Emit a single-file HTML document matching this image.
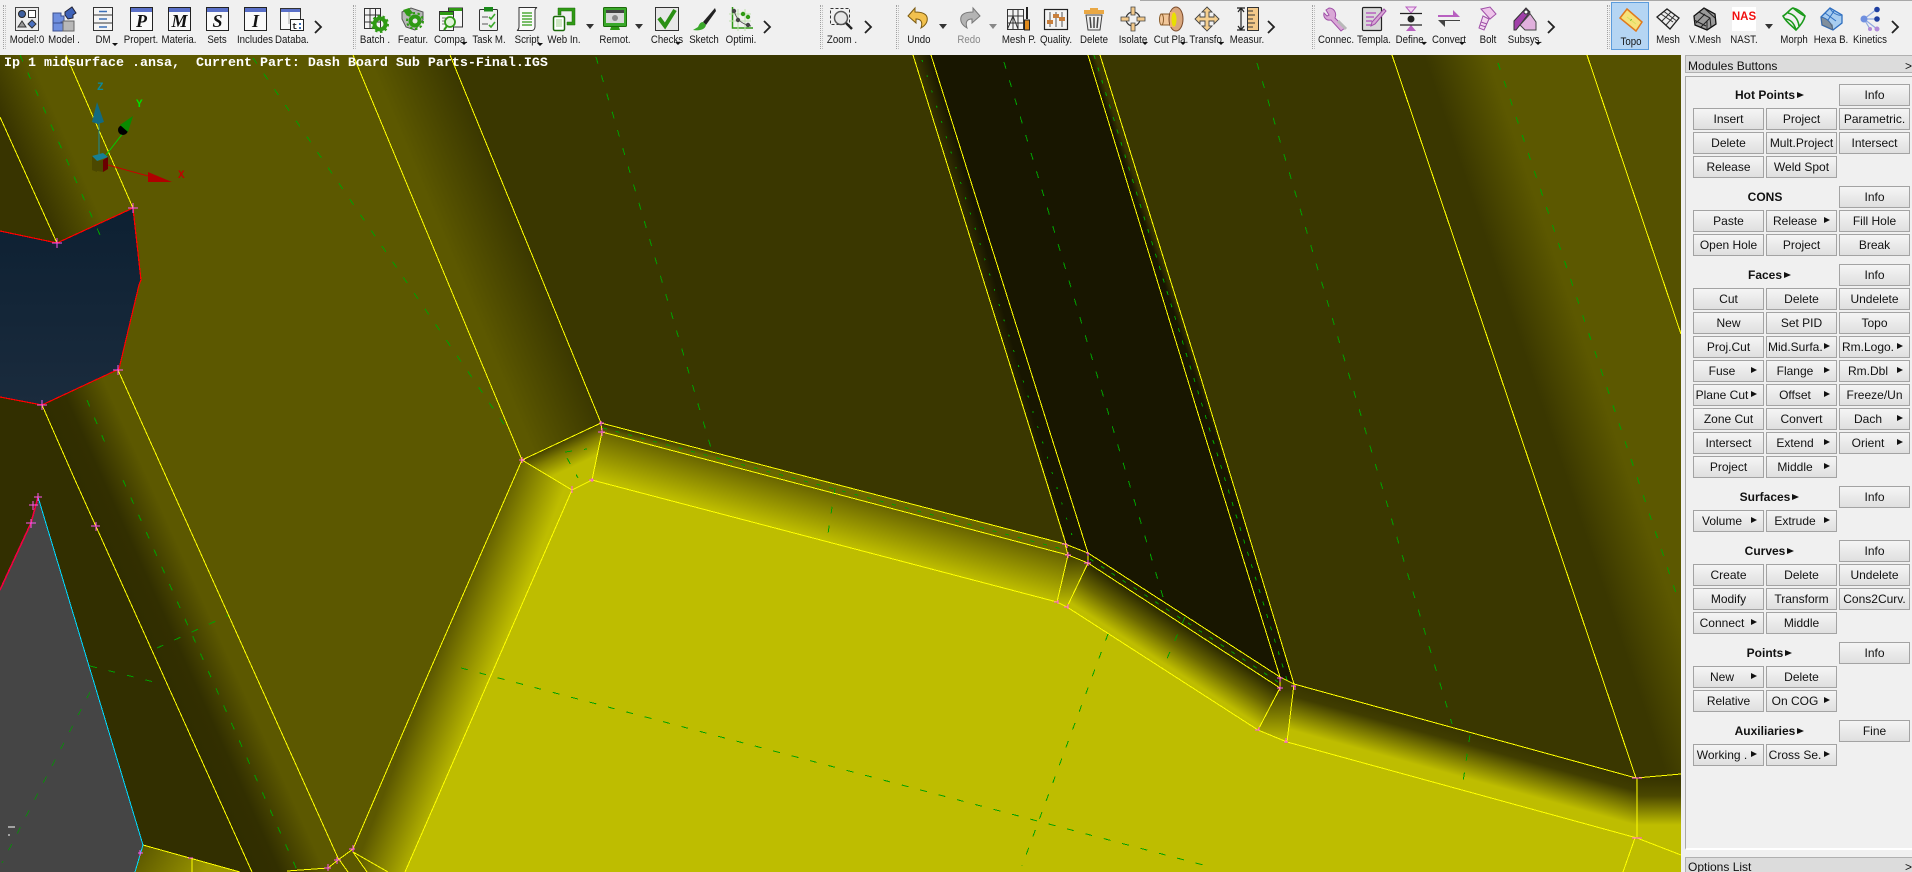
<!DOCTYPE html>
<html><head><meta charset="utf-8"><title>ANSA</title>
<style>
html,body{margin:0;padding:0;width:1912px;height:872px;overflow:hidden;background:#f0f0f0}
body{position:relative;font-family:"Liberation Sans",sans-serif;color:#111}
#vp{position:absolute;left:0;top:55px}
#tb{position:absolute;left:0;top:0}
.l{position:absolute;top:34px;font-size:11px;line-height:13px;transform:translateX(-50%) scaleX(.88);white-space:nowrap;color:#161616}
.h{position:absolute;top:5px;height:44px;border-left:1px dotted #a0a0a0;border-right:1px dotted #c0c0c0;width:1px}
#cap{position:absolute;left:4px;top:56px;font:bold 13.33px/15px "Liberation Mono",monospace;color:#fff;white-space:pre}
#panel{position:absolute;left:1681px;top:55px;width:231px;height:817px;background:#f0f0f0}
.t{position:absolute;left:1685px;width:227px;height:18px;background:#dcdcdc;border:1px solid #b0b0b0;border-right:0;box-sizing:border-box;font-size:12px;line-height:20px;padding-left:2px;color:#111}
.t b{position:absolute;right:0;top:0;font-weight:normal}
#fr{position:absolute;left:1685px;top:76px;width:227px;height:774px;border:1px solid #a8a8a8;border-right:0;border-bottom:2px solid #fff;box-sizing:border-box}
.b{position:absolute;width:71px;height:22px;box-sizing:border-box;border:1px solid #a3a3a3;background:linear-gradient(#f5f5f5,#dfdfdf);font-size:12px;line-height:20px;text-align:center;white-space:nowrap;color:#111}
.a{padding:0 14px 0 1px}
.a i{position:absolute;width:0;height:0;border-left:6px solid #111;border-top:3.5px solid transparent;border-bottom:3.5px solid transparent;right:6px;top:6px}
.c1{left:1693px}.c2{left:1766px}.c3{left:1839px}
.g{position:absolute;left:1693px;width:144px;text-align:center;font-size:12px;font-weight:bold;line-height:22px;color:#111}
.g span{position:relative}
.g i{position:absolute;width:0;height:0;border-left:7px solid #111;border-top:3.5px solid transparent;border-bottom:3.5px solid transparent;left:100%;margin-left:2px;top:50%;margin-top:-3px}
</style></head><body>

<svg id="vp" width="1681" height="817" viewBox="0 55 1681 817" xmlns="http://www.w3.org/2000/svg">
<defs>
<linearGradient id="g1" gradientUnits="userSpaceOnUse" x1="57" y1="243" x2="134" y2="209"><stop offset="0" stop-color="#383400"/><stop offset=".6" stop-color="#5c5800"/></linearGradient>
<linearGradient id="nv" x1="0" y1="0" x2="0" y2="1"><stop offset="0" stop-color="#0d2032"/><stop offset="1" stop-color="#1a2b3d"/></linearGradient>
<linearGradient id="g2" gradientUnits="userSpaceOnUse" x1="75" y1="480" x2="151.500" y2="445.500"><stop offset="0" stop-color="#302d00"/><stop offset=".3" stop-color="#322f00"/><stop offset=".8" stop-color="#5c5800"/></linearGradient>
<linearGradient id="g3" gradientUnits="userSpaceOnUse" x1="143" y1="845" x2="200" y2="880"><stop offset="0" stop-color="#5c5800"/><stop offset="1" stop-color="#9a9600"/></linearGradient>
<linearGradient id="g4" gradientUnits="userSpaceOnUse" x1="353" y1="55" x2="435.600" y2="20.500"><stop offset=".15" stop-color="#5c5800"/><stop offset="1" stop-color="#3a3700"/></linearGradient>
<linearGradient id="g5" gradientUnits="userSpaceOnUse" x1="913" y1="55" x2="931" y2="50"><stop offset="0" stop-color="#3a3700"/><stop offset="1" stop-color="#181600"/></linearGradient>
<linearGradient id="g6" gradientUnits="userSpaceOnUse" x1="1088" y1="55" x2="1100" y2="51"><stop offset="0" stop-color="#181600"/><stop offset=".5" stop-color="#3a3700"/><stop offset="1" stop-color="#3a3700"/></linearGradient>
<linearGradient id="g7" gradientUnits="userSpaceOnUse" x1="1392" y1="55" x2="1487" y2="23"><stop offset=".3" stop-color="#3a3700"/><stop offset=".9" stop-color="#5c5800"/></linearGradient>
<linearGradient id="s1" gradientUnits="userSpaceOnUse" x1="601" y1="423" x2="599" y2="432"><stop offset="0" stop-color="#333000"/><stop offset="1" stop-color="#6a6600"/></linearGradient>
<linearGradient id="s2" gradientUnits="userSpaceOnUse" x1="602" y1="432" x2="590" y2="477"><stop offset="0" stop-color="#6a6600"/><stop offset=".6" stop-color="#9c9a00"/><stop offset="1" stop-color="#bebd00"/></linearGradient>
<linearGradient id="s3" gradientUnits="userSpaceOnUse" x1="0" y1="555" x2="0" y2="605"><stop offset="0" stop-color="#403d00"/><stop offset="1" stop-color="#bebd00"/></linearGradient>
<linearGradient id="s4" gradientUnits="userSpaceOnUse" x1="1088" y1="563" x2="1062" y2="603"><stop offset="0" stop-color="#2a2800"/><stop offset=".45" stop-color="#6c6900"/><stop offset=".9" stop-color="#bebd00"/></linearGradient>
<linearGradient id="s5" gradientUnits="userSpaceOnUse" x1="0" y1="690" x2="0" y2="742"><stop offset="0" stop-color="#403d00"/><stop offset="1" stop-color="#bebd00"/></linearGradient>
<linearGradient id="s6" gradientUnits="userSpaceOnUse" x1="1294" y1="684" x2="1278" y2="742"><stop offset="0" stop-color="#383500"/><stop offset=".2" stop-color="#403d00"/><stop offset=".75" stop-color="#bebd00"/></linearGradient>
<linearGradient id="s7" gradientUnits="userSpaceOnUse" x1="0" y1="780" x2="0" y2="825"><stop offset="0" stop-color="#383500"/><stop offset=".35" stop-color="#4a4700"/><stop offset="1" stop-color="#bebd00"/></linearGradient>
<linearGradient id="s8" gradientUnits="userSpaceOnUse" x1="561" y1="441" x2="576" y2="473"><stop offset="0" stop-color="#403d00"/><stop offset=".35" stop-color="#807c00"/><stop offset=".8" stop-color="#bebd00"/></linearGradient>
<linearGradient id="s9" gradientUnits="userSpaceOnUse" x1="438" y1="654" x2="492" y2="675"><stop offset="0" stop-color="#5c5800"/><stop offset="1" stop-color="#bebd00"/></linearGradient>
<linearGradient id="s10" gradientUnits="userSpaceOnUse" x1="1088" y1="553" x2="1082" y2="563"><stop offset="0" stop-color="#1c1a00"/><stop offset="1" stop-color="#2a2800"/></linearGradient>
</defs>
<rect x="0" y="55" width="1681" height="817" fill="#5c5800"/>
<!-- top left -->
<polygon points="0,55 66,55 133,208 57,243 0,117" fill="url(#g1)"/>
<polygon points="0,117 57,243 0,231" fill="#383400"/>
<!-- lower left -->
<polygon points="0,397 42,405 75,480 252,872 0,872" fill="#322f00"/>
<polygon points="42,405 118,370 338,858 348,872 252,872 75,480" fill="url(#g2)"/>
<!-- navy -->
<polygon points="0,231 57,243 133,208 141,280 139,285 119,369 42,405 0,397" fill="url(#nv)"/>
<!-- gray -->
<polygon points="38,497 143,845 135,872 0,872 0,590 31,523" fill="#454545"/>
<polygon points="143,845 240,872 135,872" fill="url(#g3)"/>
<!-- upper centre -->
<polygon points="353,55 522,460 601,423 450,55" fill="url(#g4)"/>
<polygon points="450,55 601,423 1065,544 913,55" fill="#3a3700"/>
<polygon points="913,55 931,55 1088,553 1066,544" fill="url(#g5)"/>
<polygon points="931,55 1088,55 1200,420 1280,677 1088,553" fill="#181600"/>
<polygon points="1088,55 1100,55 1200,375 1294,684 1280,677 1200,420" fill="url(#g6)"/>
<polygon points="1100,55 1392,55 1636,778 1294,684 1200,375" fill="#3a3700"/>
<polygon points="1392,55 1587,55 1681,334 1681,774 1636,778" fill="url(#g7)"/>
<polygon points="1587,55 1681,55 1681,334" fill="#555100"/>
<!-- yellow -->
<polygon points="572,490 592,480 1057,602 1067,607 1258,730 1287,742 1637,838 1681,855 1681,872 405,872" fill="#bebd00"/>
<polygon points="522,460 572,490 405,872 367,872 353,849" fill="url(#s9)"/>
<polygon points="522,460 601,423 602,432 592,480 572,490" fill="url(#s8)"/>
<polygon points="601,423 1065,544 1068,555 602,432" fill="url(#s1)"/>
<polygon points="602,432 1068,555 1057,602 592,480" fill="url(#s2)"/>
<polygon points="1065,544 1088,553 1088,563 1068,555" fill="#333000"/>
<polygon points="1068,555 1088,563 1067,607 1057,602" fill="url(#s3)"/>
<polygon points="1088,553 1280,677 1280,688 1088,563" fill="url(#s10)"/>
<polygon points="1088,563 1280,688 1258,730 1067,607" fill="url(#s4)"/>
<polygon points="1280,677 1294,684 1287,742 1258,730 1280,688" fill="url(#s5)"/>
<polygon points="1294,684 1636,778 1637,838 1287,742" fill="url(#s6)"/>
<polygon points="1637,778 1681,774 1681,855 1637,838" fill="url(#s7)"/>

<!-- green dashes -->
<g fill="none" stroke="#00a000" stroke-width="1" stroke-dasharray="7 12" shape-rendering="crispEdges">
<path d="M20 55L100 235M87 400L108 450M123 480L297 870M253 58L510 433M596 57L711 448M835 488L827 540M1004 62L1163 597M1185 617L1163 668M1257 63L1452 724M1470 735L1462 789M1498 63L1678 599M1108 634L1022 866M461 668L1207 866M157 648L229 615M90 666L162 684M565 452L587 449M567 458L578 478"/>
<path d="M90 692L2 863" stroke="#0a8a0a"/>
</g>
<g fill="none" stroke="#00a000" stroke-width="1" stroke-dasharray="4 9" shape-rendering="crispEdges">
<path d="M603 428L1062 549M1090 559L1278 682M1094 55L1287 680"/>
<path d="M922 60L1075 545" stroke-dasharray="2 14"/>
</g>

<!-- yellow lines -->
<g fill="none" stroke="#ffff00" stroke-width="1" shape-rendering="crispEdges">
<path d="M0 117L57 243M66 55L133 208M118 370L338 858M42 405L75 480L252 872M353 55L522 460L420 693L353 849M450 55L500 177L601 423L1065 544L1088 553L1280 677L1294 684L1636 778L1681 774M602 432L1068 555L1088 563L1280 688M592 480L1057 602L1067 607L1258 730L1287 742L1637 838L1681 855M522 460L572 490L592 480L602 432L601 423M522 460L601 423M572 490L405 872M1065 544L1068 555L1057 602M1088 553L1088 563L1067 607M1280 678L1280 688L1258 730M1294 684L1287 742M913 55L1066 544M931 55L1088 553M1088 55L1200 420L1280 677M1100 55L1200 375L1294 684M1392 55L1636 778M1587 55L1681 334M1637 778L1637 838M1635 838L1623 872M143 845L240 872M192 858L192 872M338 858L348 872M338 860L353 849M353 852L367 872M353 852L388 872M287 871L328 868L338 860"/>
</g>
<!-- red / cyan outlines -->
<path d="M0 231L57 243L133 208L141 280L139 285L119 369L42 405L0 397" fill="none" stroke="#ff0000" stroke-width="1.200" shape-rendering="crispEdges"/>
<path d="M38 497L31 523L0 590" fill="none" stroke="#f00040" stroke-width="1.600" shape-rendering="crispEdges"/>
<path d="M38 497L143 845L135 872" fill="none" stroke="#00d8ff" stroke-width="1" shape-rendering="crispEdges"/>
<!-- pink crosses -->
<path fill="none" stroke="#ff55ee" stroke-width="1" shape-rendering="crispEdges" d="M128 208h10M133 203v10M52 243h10M57 238v10M113 370h10M118 365v10M37 405h10M42 400v10M34 497h8M38 493v8M29 505h9M33 501v9M26 523h10M31 519v9M91 526h9M96 522v9M138 853h5M140 850v6M334 860h7M337 857v7M349 849h6M353 845v7M324 868h7M328 864v7M519 460h6M522 457v6M599 423h5M601 421v5M598 432h7M602 428v8M589 480h5M592 478v4M572 486v7M1062 544h5M1067 544v4M1065 555h6M1068 552v6M1086 553h3M1088 553v3M1084 563h7M1088 560v6M1054 602h4M1058 600v4M1064 607h4M1068 604v5M1277 678h6M1280 678v4M1277 688h6M1280 686v5M1291 686h5M1295 686v4M1255 730h4M1259 727v4M1284 742h4M1286 738v5M1632 778h10M1632 838h10M188 858h5"/>
<!-- little white marks -->
<path d="M8 827h7M8 835h2" stroke="#fff" stroke-width="1" shape-rendering="crispEdges"/>
<!-- axes -->
<g>
<path d="M99 122V157" stroke="#1a8a9a" stroke-width="1"/>
<path d="M106 155L127 128" stroke="#00d000" stroke-width="1"/>
<path d="M108 165L148 176" stroke="#c80000" stroke-width="1"/>
<path d="M97 102L104 122L98 124L92 122Z" fill="#126a80"/>
<circle cx="123" cy="130" r="5" fill="#000"/>
<path d="M133 116L128 132L120 125Z" fill="#0a8a00"/>
<path d="M172 182L148 172L148 182Z" fill="#b00000"/>
<path d="M92 156L103 153L108 157L97 161Z" fill="#178094"/>
<path d="M92 156L97 161V172L92 170Z" fill="#4c4800"/>
<path d="M97 161L92 170L103 172L103 160Z" fill="#4c4800"/>
<path d="M103 160L108 157V169L103 172Z" fill="#6a0000"/>
<text x="97" y="90" font-family="Liberation Mono" font-weight="bold" font-size="11" fill="#0c8a9c">Z</text>
<text x="136" y="107" font-family="Liberation Mono" font-weight="bold" font-size="11" fill="#00e000">Y</text>
<text x="178" y="178" font-family="Liberation Mono" font-weight="bold" font-size="11" fill="#c00000">X</text>
</g>
</svg>
<div id="cap">Ip 1 midsurface .ansa,  Current Part: Dash Board Sub Parts-Final.IGS</div>

<!-- toolbar -->
<div style="position:absolute;left:0;top:0;width:1912px;height:55px;background:#f0f0f0"></div>
<div style="position:absolute;left:1140px;top:0;width:772px;height:1px;background:#a8a8a8"></div>
<div class="h" style="left:3px"></div><div class="h" style="left:353px"></div><div class="h" style="left:820px"></div><div class="h" style="left:896px"></div><div class="h" style="left:1312px"></div><div class="h" style="left:1607px"></div>
<div style="position:absolute;left:1611px;top:2px;width:38px;height:48px;box-sizing:border-box;background:#b5d5f3;border:1px solid #5c9cdc"></div>

<svg id="tb" width="1912" height="55" xmlns="http://www.w3.org/2000/svg">
<!-- Model:0 -->
<g transform="translate(15,7)"><rect x=".5" y=".5" width="23" height="23" fill="#ececec" stroke="#444"/><circle cx="7" cy="7" r="3.500" fill="#3e5f9e" stroke="#222"/><rect x="13.500" y="3.500" width="7" height="7" fill="#fff" stroke="#333"/><path d="M7 14l4 6H3z" fill="#999" stroke="#333"/><path d="M17 13l4 4-4 4-4-4z" fill="#4a70c0" stroke="#333"/></g>
<!-- Model . -->
<g transform="translate(52,7)"><path d="M1 6h8v3h3v6H9v1H1z" fill="#6f8fdf" stroke="#3b4f8f"/><path d="M1 16h10v8H1z" fill="#6f8fdf" stroke="#3b4f8f"/><path d="M11 14h11v10H11z" fill="#b8b8b8" stroke="#666"/><path d="M13 5l7-5 4 6-3 2 0 3-5 1-3-4z" fill="#3e62b8" stroke="#223"/></g>
<!-- DM -->
<g transform="translate(91,7)"><rect x="2.500" y=".5" width="19" height="23" fill="#f4f4f4" stroke="#333"/><path d="M2.500 8h19M2.500 16h19" stroke="#333"/><path d="M8 4.500h8M8 12h8M8 20h8" stroke="#3c70b8" stroke-width="1.500"/></g>
<!-- P M S I -->
<g transform="translate(129,7)"><rect x="1.500" y=".5" width="22" height="23" fill="#fafafa" stroke="#222"/><rect x="2" y="1" width="21" height="4" fill="#5a70c8"/><text x="12.500" y="20" text-anchor="middle" font-family="Liberation Serif" font-style="italic" font-weight="bold" font-size="18" fill="#111">P</text></g>
<g transform="translate(167,7)"><rect x="1.500" y=".5" width="22" height="23" fill="#fafafa" stroke="#222"/><rect x="2" y="1" width="21" height="4" fill="#5a70c8"/><text x="12.500" y="20" text-anchor="middle" font-family="Liberation Serif" font-style="italic" font-weight="bold" font-size="18" fill="#111">M</text></g>
<g transform="translate(205,7)"><rect x="1.500" y=".5" width="22" height="23" fill="#fafafa" stroke="#222"/><rect x="2" y="1" width="21" height="4" fill="#5a70c8"/><text x="12.500" y="20" text-anchor="middle" font-family="Liberation Serif" font-style="italic" font-weight="bold" font-size="18" fill="#111">S</text></g>
<g transform="translate(243,7)"><rect x="1.500" y=".5" width="22" height="23" fill="#fafafa" stroke="#222"/><rect x="2" y="1" width="21" height="4" fill="#5a70c8"/><text x="12.500" y="20" text-anchor="middle" font-family="Liberation Serif" font-style="italic" font-weight="bold" font-size="18" fill="#111">I</text></g>
<!-- Databa. -->
<g transform="translate(280,7)"><rect x=".5" y="1.500" width="20" height="21" fill="#fafafa" stroke="#333"/><rect x="1" y="2" width="19" height="3" fill="#5a70c8"/><path d="M9 5v12" stroke="#aaa"/><rect x="10.500" y="12.500" width="13" height="11" fill="#fff" stroke="#222"/><text x="12" y="22" font-family="Liberation Mono" font-weight="bold" font-size="9" fill="#222">t</text><path d="M19 16h2v2h-2zM19 20h2v2h-2z" fill="#3c70b8"/></g>
<!-- Batch -->
<g transform="translate(363,7)"><rect x="1.500" y="1.500" width="16" height="20" fill="#f4f4f4" stroke="#333"/><path d="M1.500 8h16M1.500 15h16M7 1.500v20M12.500 1.500v20" stroke="#333"/><circle cx="17" cy="17" r="5.500" fill="none" stroke="#2f9a14" stroke-width="4"/><circle cx="17" cy="17" r="8" fill="none" stroke="#2f9a14" stroke-width="2" stroke-dasharray="2.500 2.500"/></g>
<!-- Featur. -->
<g transform="translate(401,7)"><path d="M1 5l9-4 12 4v8l-8 10-9-3-4-8z" fill="#b8b8b8" stroke="#555"/><path d="M2 3l6-2 4 5-6 3z" fill="#2f9a14"/><circle cx="14" cy="14" r="4.500" fill="#e8e8e8" stroke="#2f9a14" stroke-width="4"/><circle cx="14" cy="14" r="8" fill="none" stroke="#2f9a14" stroke-width="2" stroke-dasharray="2.500 2.500"/></g>
<!-- Compa. -->
<g transform="translate(439,7)"><rect x="9.500" y="1" width="14" height="19" fill="#f6f6f6" stroke="#333"/><rect x="10" y="1" width="13" height="3" fill="#2f9a14"/><rect x=".5" y="4.500" width="14" height="19" fill="#f6f6f6" stroke="#333"/><rect x="1" y="5" width="13" height="3" fill="#2f9a14"/><path d="M3 11h9M3 14h9M3 17h9" stroke="#777"/><circle cx="11" cy="15" r="5" fill="#e0f4d8" stroke="#2f9a14" stroke-width="1.800"/><path d="M8 19l-3 4" stroke="#2f9a14" stroke-width="2"/></g>
<!-- Task M. -->
<g transform="translate(477,7)"><rect x="2.500" y="2.500" width="18" height="21" rx="1" fill="#f0f0f0" stroke="#333"/><rect x="7" y="0" width="9" height="4.500" fill="#1b8a1b"/><path d="M5 10h6M5 17h6" stroke="#555"/><path d="M12 10l2 2 4-5M12 18l2 2 4-5" fill="none" stroke="#3aa82a" stroke-width="1.600"/></g>
<!-- Script -->
<g transform="translate(515,7)"><path d="M4 .5h18c-2 1-2 2-2 4v15c0 2-1 4-3 4H2c2-1 2-3 2-4z" fill="#fafafa" stroke="#333"/><path d="M7 6h10M7 9h10M7 12h10M7 15h10M7 18h10" stroke="#2f9a14" stroke-width="1.200"/></g>
<!-- Web In. -->
<g transform="translate(552,7)"><path d="M6 1h17v17H15V15h5V4H9v4H6z" fill="#2f9a14" stroke="#1c6a0a" stroke-width=".5"/><rect x="1.500" y="9.500" width="11" height="14" rx="1.500" fill="#fff" stroke="#1c6a0a" stroke-width="1.500"/><rect x="4" y="12" width="6" height="8" fill="#cfe8c4"/></g>
<path d="M586 24h8l-4 5z" fill="#333"/>
<!-- Remot. -->
<g transform="translate(603,7)"><rect x=".5" y=".5" width="23" height="19" rx="1" fill="#3aa82a" stroke="#1c6a0a"/><rect x="3" y="3" width="18" height="13" fill="#d8d8d8"/><rect x="3" y="3" width="18" height="3" fill="#444"/><circle cx="12" cy="11" r="3" fill="#888"/><path d="M8 20h8l1 3H7z" fill="#2f9a14"/></g>
<path d="M635 24h8l-4 5z" fill="#333"/>
<!-- Checks -->
<g transform="translate(655,7)"><rect x=".5" y=".5" width="23" height="23" fill="#e8e8e8" stroke="#333"/><path d="M4 11l6 8L20 3" fill="none" stroke="#2a8f14" stroke-width="4"/></g>
<!-- Sketch -->
<g transform="translate(692,7)"><path d="M23 1L11 15l3 3L24 4z" fill="#222"/><path d="M11 15c-3 0-4 3-5 5l-5 3c6 1 12 0 13-5z" fill="#3aa82a"/></g>
<!-- Optimi. -->
<g transform="translate(729,7)"><path d="M3.500 0V21H24" fill="none" stroke="#2f9a14" stroke-width="1.500"/><path d="M0 7h22M0 14h22M9 2v22M16 2v22" stroke="#bfe0b0"/><path d="M5 2c1 9 7 15 17 17" fill="none" stroke="#555"/><circle cx="5" cy="4" r="2.200" fill="#444"/><circle cx="9" cy="13" r="2.200" fill="#444"/><circle cx="19" cy="18" r="2.200" fill="#444"/><circle cx="14" cy="7" r="2.200" fill="#2f9a14"/><circle cx="19" cy="10" r="2.200" fill="#2f9a14"/></g>
<!-- Zoom -->
<g transform="translate(830,7)"><rect x=".5" y="1.500" width="19" height="16" fill="none" stroke="#333" stroke-dasharray="3 2"/><circle cx="11" cy="11" r="6.500" fill="#e6e6e6" stroke="#555" stroke-width="1.500"/><path d="M16 16l6 6" stroke="#222" stroke-width="2.500"/></g>
<!-- Undo -->
<g transform="translate(907,7)"><path d="M8 1L1 9l8 7v-4c5 0 7 3 5 9 5-3 7-7 6-11-1-3-5-5-12-5z" fill="#f2c14e" stroke="#7a5a10"/></g>
<path d="M939 24h8l-4 5z" fill="#333"/>
<!-- Redo -->
<g transform="translate(957,7)"><path d="M16 1l7 8-8 7v-4c-5 0-7 3-5 9-5-3-7-7-6-11 1-3 5-5 12-5z" fill="#b4b4b4" stroke="#777"/></g>
<path d="M989 24h8l-4 5z" fill="#888"/>
<!-- Mesh P. -->
<g transform="translate(1007,7)"><rect x=".5" y="2.500" width="16" height="20" fill="#f4f4f4" stroke="#333"/><path d="M.5 9h16M.5 16h16M6 2.500v20M11 2.500v20M.5 22L6 9l5 13" stroke="#333" fill="none"/><path d="M20 0v12" stroke="#222" stroke-width="2"/><path d="M17.500 13h5v10h-5z" fill="#e08a1c" stroke="#222"/></g>
<!-- Quality -->
<g transform="translate(1044,7)"><rect x=".5" y="2.500" width="23" height="20" fill="#f4f4f4" stroke="#222" stroke-width="1.200"/><path d="M6 5v15M12 5v15M18 5v15" stroke="#555"/><rect x="3" y="13" width="6" height="4" fill="#c87f3c"/><rect x="9" y="7" width="6" height="4" fill="#c87f3c"/><rect x="15" y="10" width="6" height="4" fill="#c87f3c"/></g>
<!-- Delete -->
<g transform="translate(1082,7)"><rect x="2" y="3" width="20" height="4" fill="#e9a845"/><path d="M8 1h8v2H8z" fill="#e9a845"/><path d="M4 8h16l-2 15H6z" fill="#eee" stroke="#444"/><path d="M8 10l1 11M12 10v11M16 10l-1 11" stroke="#444" stroke-width="1.500"/></g>
<!-- Isolate -->
<g transform="translate(1121,7)"><circle cx="12" cy="12" r="7" fill="none" stroke="#333" stroke-width="1.200"/><path d="M10 0h4v8h-4zM10 16h4v8h-4zM0 10h8v4H0zM16 10h8v4h-8z" fill="#f3c98a" stroke="#444" stroke-width=".8"/></g>
<!-- Cut Pla. -->
<g transform="translate(1159,7)"><path d="M2 7h9v11H2z" fill="#f2c79a" stroke="#8a5c2a"/><ellipse cx="2.500" cy="12.500" rx="2" ry="5.500" fill="#f2c79a" stroke="#8a5c2a"/><ellipse cx="17" cy="12" rx="7" ry="12" fill="#d9a67c" stroke="#7a4a2a"/><path d="M11 5h5v15h-5z" fill="#f2b070"/><ellipse cx="15" cy="12.500" rx="2.500" ry="7" fill="#e8e000"/></g>
<!-- Transfo. -->
<g transform="translate(1195,7)"><path d="M12 0l5 5h-3v5h5V7l5 5-5 5v-3h-5v5h3l-5 5-5-5h3v-5H5v3l-5-5 5-5v3h5V5H7z" fill="#f5cf8e" stroke="#444" stroke-width=".9"/></g>
<!-- Measur. -->
<g transform="translate(1235,7)"><path d="M2 1h8M2 23h8M6 1v22M3 5l3-4 3 4M3 19l3 4 3-4" fill="none" stroke="#222" stroke-width="1.200"/><rect x="12.500" y=".5" width="11" height="23" fill="#f3c98a" stroke="#333"/><path d="M13 4h5M13 8h7M13 12h5M13 16h7M13 20h5" stroke="#333"/></g>
<!-- Connec. -->
<g transform="translate(1324,7)"><path d="M5 1L2 3l3 5-2 1-3-3c-1 4 2 8 7 7l10 11 4-3-10-10c2-5-1-10-6-10z" fill="#d9a7d6" stroke="#a050a8"/><path d="M14 14l8 8" stroke="#b8b8b8" stroke-width="3"/></g>
<!-- Templa. -->
<g transform="translate(1362,7)"><rect x=".5" y=".5" width="19" height="23" rx="1" fill="#d8d8d8" stroke="#222" stroke-width="1.200"/><path d="M4 6h10M4 10h8M4 14h6M4 18h5" stroke="#b860c0" stroke-width="1.400"/><path d="M22 2l2 2-11 13-4 2 1-4z" fill="#d9a7d6" stroke="#a050a8"/></g>
<!-- Define -->
<g transform="translate(1399,7)"><path d="M7 0h10l-5 6z" fill="#f4d8f2" stroke="#b860c0"/><path d="M7 24h10l-5-6z" fill="#b860c0"/><path d="M1 6.500h22M1 18h22" stroke="#222" stroke-width="1.200"/><circle cx="12" cy="12" r="3.500" fill="#222"/></g>
<!-- Convert -->
<g transform="translate(1437,7)"><path d="M1 8h15V3l7 7H1z" fill="#b860c0"/><path d="M23 14H8v6l-7-7h22z" fill="#444"/></g>
<!-- Bolt -->
<g transform="translate(1476,7)"><path d="M5 2l9-2 6 7-6 5z" fill="#eec4ea" stroke="#a050a8"/><path d="M7 9l6 3-5 11-5-2z" fill="#f2d8f0" stroke="#a050a8"/><path d="M5 15l6 2M4 18l6 2" stroke="#a050a8"/></g>
<!-- Subsys. -->
<g transform="translate(1513,7)"><path d="M1 14L13 1l4 4L3 23H1z" fill="#a040a8" stroke="#333"/><path d="M13 1l10 14v8H12L7 18 17 7z" fill="#e0b0dc" stroke="#444"/><circle cx="13" cy="5" r="2" fill="#fff" stroke="#333"/></g>
<!-- Topo -->
<g transform="translate(1619,8)"><path d="M8 1l15 13-6 9L1 10z" fill="#f6e27a" stroke="#e07a1c" stroke-width="1.500"/><circle cx="12" cy="12" r="1" fill="#4aa02a"/><path d="M8 9l9 7" stroke="#d8e060"/></g>
<!-- Mesh -->
<g transform="translate(1656,7)"><path d="M1 10L11 2l12 9-9 11z" fill="#eee" stroke="#222" stroke-width="1.300"/><path d="M5 7l12 8M8 4.500l12 9M6 14l9-9M10 18l9-10" stroke="#333"/></g>
<!-- V.Mesh -->
<g transform="translate(1693,7)"><path d="M1 9L11 1l11 6 1 10-9 6-12-5z" fill="#9a9a9a" stroke="#111" stroke-width="1.300"/><path d="M6 5l11 6 1 9M11 1l11 10M1 13l12 6M3 16l9-9M8 20l9-9M14 23v-9" stroke="#222" fill="none"/></g>
<!-- NAST -->
<rect x="1732" y="7" width="24" height="24" fill="#fff"/><text x="1744" y="20" text-anchor="middle" font-family="Liberation Sans" font-weight="bold" font-size="11.500" fill="#f01010">NAS</text>
<path d="M1765 24h8l-4 5z" fill="#333"/>
<!-- Morph -->
<g transform="translate(1782,7)" fill="none" stroke="#1a9a1a" stroke-width="1.600"><path d="M1 9c5-3 7-7 10-8 4 1 8 3 12 8-1 5-5 10-9 14-4-4-10-8-13-14z"/><path d="M6 6c5 1 10 5 11 13M3 12c5 0 9 4 11 11M11 1c4 3 7 6 12 8"/></g>
<!-- Hexa B. -->
<g transform="translate(1819,7)"><path d="M2 10L11 1l12 7v8l-9 7-11-5z" fill="#a8cdf0" stroke="#2f6fc0" stroke-width="1.300"/><path d="M11 1c2 5 8 8 12 7M2 10c5 1 10 4 12 13M6 6l11 8M15 4l-6 9" stroke="#2f6fc0" fill="none"/><path d="M2 10c5 2 8 4 12 8v5l-11-5z" fill="#666" opacity=".6"/></g>
<!-- Kinetics -->
<g transform="translate(1858,7)"><path d="M6 12L19 2M6 12h13M6 12l13 10M6 12l6 10" stroke="#8fa8e0" stroke-width="1.200"/><circle cx="6" cy="12" r="3.500" fill="#6f8fdf"/><circle cx="19" cy="2.500" r="2.800" fill="#1f3fa0"/><circle cx="19" cy="12" r="2.800" fill="#1f3fa0"/><circle cx="19" cy="22" r="2.500" fill="#b08ad8"/><circle cx="12" cy="22" r="2" fill="#b08ad8"/></g>
<!-- chevrons -->
<g fill="none" stroke="#222" stroke-width="1.800"><path d="M315 21l6 6-6 6M764 21l6 6-6 6M865 21l6 6-6 6M1268 21l6 6-6 6M1548 21l6 6-6 6M1892 21l6 6-6 6"/></g>
<!-- small sub arrows -->
<path fill="#111" d="M112 43h6l-3 3zM461 42h6l-3 3zM537 43h6l-3 3zM675 42h6l-3 3zM1142 42h6l-3 3zM1180 42h6l-3 3zM1218 42h6l-3 3zM1421 42h6l-3 3zM1459 42h6l-3 3zM1535 42h6l-3 3z"/>
</svg>

<div class="l" style="left:27px">Model:0</div><div class="l" style="left:64px">Model .</div><div class="l" style="left:103px">DM</div><div class="l" style="left:141px">Propert.</div><div class="l" style="left:179px">Materia.</div><div class="l" style="left:217px">Sets</div><div class="l" style="left:255px">Includes</div><div class="l" style="left:292px">Databa.</div>
<div class="l" style="left:375px">Batch .</div><div class="l" style="left:413px">Featur.</div><div class="l" style="left:451px">Compa.</div><div class="l" style="left:489px">Task M.</div><div class="l" style="left:527px">Script</div><div class="l" style="left:564px">Web In.</div><div class="l" style="left:615px">Remot.</div><div class="l" style="left:667px">Checks</div><div class="l" style="left:704px">Sketch</div><div class="l" style="left:741px">Optimi.</div>
<div class="l" style="left:842px">Zoom .</div>
<div class="l" style="left:919px">Undo</div><div class="l" style="left:969px;color:#888">Redo</div><div class="l" style="left:1019px">Mesh P.</div><div class="l" style="left:1056px">Quality.</div><div class="l" style="left:1094px">Delete</div><div class="l" style="left:1133px">Isolate</div><div class="l" style="left:1171px">Cut Pla.</div><div class="l" style="left:1207px">Transfo.</div><div class="l" style="left:1247px">Measur.</div>
<div class="l" style="left:1336px">Connec.</div><div class="l" style="left:1374px">Templa.</div><div class="l" style="left:1411px">Define.</div><div class="l" style="left:1449px">Convert</div><div class="l" style="left:1488px">Bolt</div><div class="l" style="left:1525px">Subsys.</div>
<div class="l" style="left:1631px;top:36px">Topo</div><div class="l" style="left:1668px">Mesh</div><div class="l" style="left:1705px">V.Mesh</div><div class="l" style="left:1744px">NAST.</div><div class="l" style="left:1794px">Morph</div><div class="l" style="left:1831px">Hexa B.</div><div class="l" style="left:1870px">Kinetics</div>

<!-- panel -->
<div id="panel"></div>
<div class="t" style="top:55px">Modules Buttons<b>&gt;</b></div>
<div id="fr"></div>
<div class="t" style="top:857px;height:15px;border-bottom:0;line-height:18px">Options List<b>&gt;</b></div>

<div class="g" style="top:84px"><span>Hot Points<i></i></span></div><div class="b c3" style="top:84px">Info</div>
<div class="b c1" style="top:108px">Insert</div><div class="b c2" style="top:108px">Project</div><div class="b c3" style="top:108px">Parametric.</div>
<div class="b c1" style="top:132px">Delete</div><div class="b c2" style="top:132px">Mult.Project</div><div class="b c3" style="top:132px">Intersect</div>
<div class="b c1" style="top:156px">Release</div><div class="b c2" style="top:156px">Weld Spot</div>

<div class="g" style="top:186px"><span>CONS</span></div><div class="b c3" style="top:186px">Info</div>
<div class="b c1" style="top:210px">Paste</div><div class="b c2 a" style="top:210px">Release<i></i></div><div class="b c3" style="top:210px">Fill Hole</div>
<div class="b c1" style="top:234px">Open Hole</div><div class="b c2" style="top:234px">Project</div><div class="b c3" style="top:234px">Break</div>

<div class="g" style="top:264px"><span>Faces<i></i></span></div><div class="b c3" style="top:264px">Info</div>
<div class="b c1" style="top:288px">Cut</div><div class="b c2" style="top:288px">Delete</div><div class="b c3" style="top:288px">Undelete</div>
<div class="b c1" style="top:312px">New</div><div class="b c2" style="top:312px">Set PID</div><div class="b c3" style="top:312px">Topo</div>
<div class="b c1" style="top:336px">Proj.Cut</div><div class="b c2 a" style="top:336px">Mid.Surfa.<i></i></div><div class="b c3 a" style="top:336px">Rm.Logo.<i></i></div>
<div class="b c1 a" style="top:360px">Fuse<i></i></div><div class="b c2 a" style="top:360px">Flange<i></i></div><div class="b c3 a" style="top:360px">Rm.Dbl<i></i></div>
<div class="b c1 a" style="top:384px">Plane Cut<i></i></div><div class="b c2 a" style="top:384px">Offset<i></i></div><div class="b c3" style="top:384px">Freeze/Un</div>
<div class="b c1" style="top:408px">Zone Cut</div><div class="b c2" style="top:408px">Convert</div><div class="b c3 a" style="top:408px">Dach<i></i></div>
<div class="b c1" style="top:432px">Intersect</div><div class="b c2 a" style="top:432px">Extend<i></i></div><div class="b c3 a" style="top:432px">Orient<i></i></div>
<div class="b c1" style="top:456px">Project</div><div class="b c2 a" style="top:456px">Middle<i></i></div>

<div class="g" style="top:486px"><span>Surfaces<i></i></span></div><div class="b c3" style="top:486px">Info</div>
<div class="b c1 a" style="top:510px">Volume<i></i></div><div class="b c2 a" style="top:510px">Extrude<i></i></div>

<div class="g" style="top:540px"><span>Curves<i></i></span></div><div class="b c3" style="top:540px">Info</div>
<div class="b c1" style="top:564px">Create</div><div class="b c2" style="top:564px">Delete</div><div class="b c3" style="top:564px">Undelete</div>
<div class="b c1" style="top:588px">Modify</div><div class="b c2" style="top:588px">Transform</div><div class="b c3" style="top:588px">Cons2Curv.</div>
<div class="b c1 a" style="top:612px">Connect<i></i></div><div class="b c2" style="top:612px">Middle</div>

<div class="g" style="top:642px"><span>Points<i></i></span></div><div class="b c3" style="top:642px">Info</div>
<div class="b c1 a" style="top:666px">New<i></i></div><div class="b c2" style="top:666px">Delete</div>
<div class="b c1" style="top:690px">Relative</div><div class="b c2 a" style="top:690px">On COG<i></i></div>

<div class="g" style="top:720px"><span>Auxiliaries<i></i></span></div><div class="b c3" style="top:720px">Fine</div>
<div class="b c1 a" style="top:744px">Working .<i></i></div><div class="b c2 a" style="top:744px">Cross Se.<i></i></div>
</body></html>
